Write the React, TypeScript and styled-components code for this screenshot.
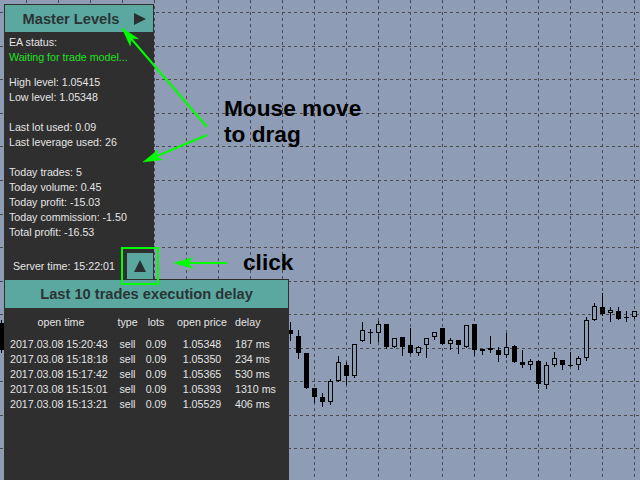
import styled, { createGlobalStyle } from 'styled-components';

const GlobalStyle = createGlobalStyle`
  html, body {
    margin: 0;
    padding: 0;
    background: #8f9cb6;
  }
  body {
    font-family: 'Liberation Sans', Arial, sans-serif;
  }
`;

const CHART_BG = '#8f9cb6';
const LIME = '#00ff00';

const gridX = Array.from({ length: 20 }, (_, i) => 26 + i * 32);
const gridY = [12, 46, 79, 113, 146, 180, 214, 247, 281, 314, 348, 381, 415, 448];

// x, body top, body bottom, wick top, wick bottom, bearish (filled)
type Candle = [number, number, number, number, number, boolean];
const candles: Candle[] = [
  [1, 323, 350, 320, 352, true],
  [290, 330, 334, 322, 340, true],
  [298, 336, 353, 330, 358, true],
  [306, 353, 388, 353, 388, true],
  [314, 388, 397, 388, 402, true],
  [322, 397, 402, 393, 406, true],
  [330, 381, 402, 379, 404, false],
  [338, 362, 381, 356, 381, false],
  [346, 365, 376, 362, 384, true],
  [354, 344, 376, 344, 377, false],
  [362, 330, 341, 322, 341, false],
  [370, 332, 333, 329, 343, true],
  [378, 324, 333, 321, 341, false],
  [386, 324, 347, 324, 348, true],
  [394, 338, 347, 338, 347, false],
  [402, 337, 347, 337, 355, true],
  [410, 345, 353, 328, 353, true],
  [418, 347, 353, 346, 355, false],
  [426, 338, 345, 338, 357, false],
  [434, 332, 337, 332, 339, false],
  [442, 328, 344, 328, 344, true],
  [450, 340, 344, 338, 349, false],
  [458, 340, 345, 340, 353, true],
  [466, 325, 347, 325, 347, false],
  [474, 324, 350, 324, 355, true],
  [482, 349, 351, 349, 354, true],
  [490, 348, 350, 336, 352, true],
  [498, 350, 355, 347, 361, true],
  [506, 347, 355, 333, 357, false],
  [514, 346, 362, 345, 362, true],
  [522, 362, 365, 350, 367, true],
  [530, 361, 365, 359, 369, false],
  [538, 361, 384, 360, 388, true],
  [546, 365, 385, 362, 388, false],
  [554, 358, 365, 352, 366, false],
  [562, 360, 365, 360, 369, true],
  [570, 365, 366, 352, 366, true],
  [578, 358, 365, 356, 369, false],
  [586, 320, 358, 317, 360, false],
  [594, 306, 320, 303, 320, false],
  [602, 307, 314, 293, 315, true],
  [610, 310, 313, 307, 321, false],
  [618, 311, 319, 307, 319, true],
  [626, 317, 318, 311, 321, true],
  [634, 311, 317, 311, 318, false],
];

const levelLines = ['High level: 1.05415', 'Low level: 1.05348'];
const lastLines = ['Last lot used: 0.09', 'Last leverage used: 26'];
const todayLines = [
  'Today trades: 5',
  'Today volume: 0.45',
  'Today profit: -15.03',
  'Today commission: -1.50',
  'Total profit: -16.53',
];

const trades = [
  ['2017.03.08 15:20:43', 'sell', '0.09', '1.05348', '187 ms'],
  ['2017.03.08 15:18:18', 'sell', '0.09', '1.05350', '234 ms'],
  ['2017.03.08 15:17:42', 'sell', '0.09', '1.05365', '530 ms'],
  ['2017.03.08 15:15:01', 'sell', '0.09', '1.05393', '1310 ms'],
  ['2017.03.08 15:13:21', 'sell', '0.09', '1.05529', '406 ms'],
];

const colAlign: ('left' | 'center')[] = ['left', 'center', 'center', 'center', 'left'];

// arrow heads for the callouts
function arrowHead(x1: number, y1: number, x2: number, y2: number) {
  const len = Math.hypot(x2 - x1, y2 - y1);
  const dx = (x2 - x1) / len;
  const dy = (y2 - y1) / len;
  const L = 19;
  const W = 5.5;
  const notch = 5;
  const bx = x2 - dx * L;
  const by = y2 - dy * L;
  const pts = [
    [x2, y2],
    [bx - dy * W, by + dx * W],
    [x2 - dx * (L - notch), y2 - dy * (L - notch)],
    [bx + dy * W, by - dx * W],
  ];
  return {
    head: pts.map((p) => p.join(',')).join(' '),
    end: [x2 - dx * (L - notch), y2 - dy * (L - notch)],
  };
}

const arrows = [
  [207, 127, 122, 28],
  [207, 135, 143, 162],
  [227, 263, 174, 263],
];

function Chart() {
  return (
    <ChartSvg width={640} height={480} viewBox="0 0 640 480">
      <rect width={640} height={480} fill={CHART_BG} />
      <g stroke="#4a4a4a" strokeWidth={1} strokeDasharray="3 3">
        {gridX.map((x) => (
          <line key={'v' + x} x1={x + 0.5} y1={0} x2={x + 0.5} y2={480} />
        ))}
        {gridY.map((y) => (
          <line key={'h' + y} x1={0} y1={y + 0.5} x2={640} y2={y + 0.5} />
        ))}
      </g>
      {candles.map(([x, top, bottom, hi, lo, bear]) => (
        <g key={x}>
          <line x1={x + 0.5} y1={hi} x2={x + 0.5} y2={lo + 1} stroke="#000" />
          {bear ? (
            <rect x={x - 2} y={top} width={5} height={Math.max(bottom - top, 1)} fill="#000" />
          ) : (
            <rect
              x={x - 1.5}
              y={top + 0.5}
              width={4}
              height={Math.max(bottom - top - 1, 1)}
              fill={CHART_BG}
              stroke="#000"
            />
          )}
        </g>
      ))}
    </ChartSvg>
  );
}

function Callouts() {
  return (
    <ArrowLayer width={640} height={480} viewBox="0 0 640 480">
      {arrows.map(([x1, y1, x2, y2], i) => {
        const { head, end } = arrowHead(x1, y1, x2, y2);
        return (
          <g key={i} fill={LIME} stroke={LIME}>
            <line x1={x1} y1={y1} x2={end[0]} y2={end[1]} strokeWidth={2.2} />
            <polygon points={head} strokeWidth={0.5} />
          </g>
        );
      })}
    </ArrowLayer>
  );
}

function App() {
  return (
    <>
      <GlobalStyle />
      <Stage>
        <Chart />

        <MasterPanel>
          <PanelHeader>
            <HeaderTitle>Master Levels</HeaderTitle>
            <svg width="12" height="12" viewBox="0 0 12 12">
              <polygon points="0,0 12,6 0,12" fill="#2a2f30" />
            </svg>
          </PanelHeader>
          <InfoBody>
            <InfoGroup>
              <InfoLine>EA status:</InfoLine>
              <InfoLine $status>Waiting for trade model...</InfoLine>
            </InfoGroup>
            <InfoGroup $gap={10}>
              {levelLines.map((t) => (
                <InfoLine key={t}>{t}</InfoLine>
              ))}
            </InfoGroup>
            <InfoGroup $gap={15}>
              {lastLines.map((t) => (
                <InfoLine key={t}>{t}</InfoLine>
              ))}
            </InfoGroup>
            <InfoGroup $gap={15}>
              {todayLines.map((t) => (
                <InfoLine key={t}>{t}</InfoLine>
              ))}
            </InfoGroup>
          </InfoBody>
          <ServerRow>
            <ServerTime>Server time: 15:22:01</ServerTime>
            <ToggleButton>
              <svg width="12" height="12" viewBox="0 0 12 12">
                <polygon points="6,0 12,12 0,12" fill="#2a2f30" />
              </svg>
            </ToggleButton>
          </ServerRow>
        </MasterPanel>

        <DelayPanel>
          <DelayHeader>Last 10 trades execution delay</DelayHeader>
          <TradeTable>
            <TradeRow $head>
              {['open time', 'type', 'lots', 'open price', 'delay'].map((h, i) => (
                <Cell key={h} $align={i === 0 ? 'center' : colAlign[i]}>
                  {h}
                </Cell>
              ))}
            </TradeRow>
            {trades.map((row) => (
              <TradeRow key={row[0]}>
                {row.map((c, i) => (
                  <Cell key={i} $align={colAlign[i]}>
                    {c}
                  </Cell>
                ))}
              </TradeRow>
            ))}
          </TradeTable>
        </DelayPanel>

        <Highlight />
        <Callouts />
        <DragNote>
          Mouse move
          <br />
          to drag
        </DragNote>
        <ClickNote>click</ClickNote>
      </Stage>
    </>
  );
}
export default App;

const Stage = styled.div`
  position: relative;
  width: 640px;
  height: 480px;
  overflow: hidden;
  color: #e4e4e4;
  font-size: 10.67px;
`;

const ChartSvg = styled.svg`
  display: block;
`;

const ArrowLayer = styled.svg`
  position: absolute;
  left: 0;
  top: 0;
  pointer-events: none;
`;

const MasterPanel = styled.section`
  position: absolute;
  left: 4px;
  top: 4px;
  width: 150px;
  height: 276px;
  box-sizing: border-box;
  border: 1px solid #2f2f2f;
  background: #2f2f2f;
  display: flex;
  flex-direction: column;
`;

const PanelHeader = styled.header`
  height: 27px;
  background: #5ba8a0;
  display: flex;
  align-items: center;
  padding: 0 7px 0 3px;
  svg {
    display: block;
  }
`;

const HeaderTitle = styled.h1`
  flex: 1;
  margin: 0;
  text-align: center;
  font-size: 14.67px;
  font-weight: bold;
  color: #2a3436;
`;

const InfoBody = styled.div`
  padding: 3px 0 0 4px;
`;

const InfoGroup = styled.div<{ $gap?: number }>`
  margin-top: ${(p) => p.$gap ?? 0}px;
`;

const InfoLine = styled.div<{ $status?: boolean }>`
  height: 15px;
  line-height: 15px;
  white-space: nowrap;
  color: ${(p) => (p.$status ? '#1fe01f' : '#e4e4e4')};
`;

const ServerRow = styled.div`
  margin-top: auto;
  display: flex;
  align-items: center;
  justify-content: space-between;
  padding-left: 8px;
`;

const ServerTime = styled.span`
  white-space: nowrap;
`;

const ToggleButton = styled.div`
  width: 26px;
  height: 26px;
  background: #5ba8a0;
  display: flex;
  align-items: center;
  justify-content: center;
  svg {
    display: block;
  }
`;

const DelayPanel = styled.section`
  position: absolute;
  left: 4px;
  top: 279px;
  width: 285px;
  bottom: 0;
  box-sizing: border-box;
  border: 1px solid #2f2f2f;
  border-bottom: 0;
  background: #2f2f2f;
`;

const DelayHeader = styled.h2`
  margin: 0;
  height: 28px;
  line-height: 28px;
  background: #5ba8a0;
  text-align: center;
  font-size: 14.67px;
  font-weight: bold;
  color: #2a3436;
`;

const TradeTable = styled.div`
  padding: 7px 0 0 4px;
`;

const TradeRow = styled.div<{ $head?: boolean }>`
  display: grid;
  grid-template-columns: 104px 29px 28px 64px 1fr;
  height: 15px;
  line-height: 15px;
  margin-bottom: ${(p) => (p.$head ? 7 : 0)}px;
`;

const Cell = styled.span<{ $align: 'left' | 'center' }>`
  white-space: nowrap;
  text-align: ${(p) => p.$align};
  padding-left: ${(p) => (p.$align === 'left' ? 1 : 0)}px;
`;

const Highlight = styled.div`
  position: absolute;
  left: 121px;
  top: 247px;
  width: 38px;
  height: 38px;
  box-sizing: border-box;
  border: 2px solid ${LIME};
`;

const Note = styled.div`
  position: absolute;
  font-size: 22.67px;
  font-weight: bold;
  line-height: 26px;
  color: #000;
  white-space: nowrap;
`;

const DragNote = styled(Note)`
  left: 224px;
  top: 95px;
`;

const ClickNote = styled(Note)`
  left: 243px;
  top: 249px;
`;
